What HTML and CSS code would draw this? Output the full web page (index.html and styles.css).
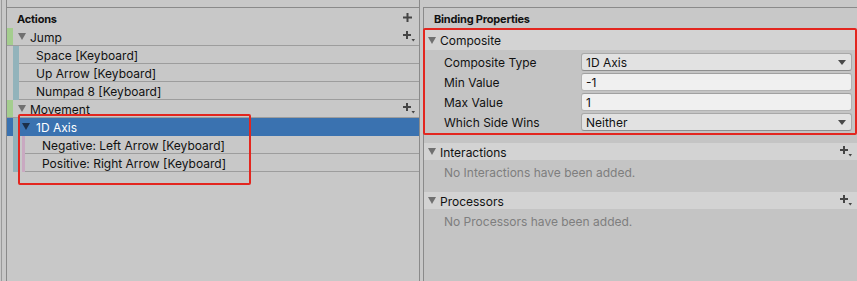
FILE: index.html
```html
<!DOCTYPE html>
<html>
<head>
<meta charset="utf-8">
<link rel="stylesheet" href="styles.css">
</head>
<body>
<div class="app">
  <div class="edge"></div>
  <div class="left">
    <div class="left-body">
      <div class="panel-head">
        <span>Actions</span>
        <svg class="plus" width="9" height="9" viewBox="0 0 9 9"><rect x="0" y="3.5" width="9" height="2"/><rect x="3.5" y="0" width="2" height="9"/></svg>
      </div>
      <div class="row action">
        <span class="bar green"></span>
        <div class="cell">
          <svg class="tri" width="8" height="7" viewBox="0 0 8 7"><path d="M0 0H8L4 7Z"/></svg>
          <span class="label">Jump</span>
          <svg class="plusdd" width="12" height="11" viewBox="0 0 12 11"><rect x="0" y="3" width="8" height="2"/><rect x="3" y="0" width="2" height="8"/><path d="M8.5 8H12L10.25 10.5Z"/></svg>
        </div>
      </div>
      <div class="row binding">
        <span class="bar"></span><span class="bar teal"></span>
        <div class="cell"><span class="label">Space [Keyboard]</span></div>
      </div>
      <div class="row binding">
        <span class="bar"></span><span class="bar teal"></span>
        <div class="cell"><span class="label">Up Arrow [Keyboard]</span></div>
      </div>
      <div class="row binding">
        <span class="bar"></span><span class="bar teal"></span>
        <div class="cell"><span class="label">Numpad 8 [Keyboard]</span></div>
      </div>
      <div class="row action">
        <span class="bar green"></span>
        <div class="cell">
          <svg class="tri" width="8" height="7" viewBox="0 0 8 7"><path d="M0 0H8L4 7Z"/></svg>
          <span class="label">Movement</span>
          <svg class="plusdd" width="12" height="11" viewBox="0 0 12 11"><rect x="0" y="3" width="8" height="2"/><rect x="3" y="0" width="2" height="8"/><path d="M8.5 8H12L10.25 10.5Z"/></svg>
        </div>
      </div>
      <div class="row composite selected">
        <span class="bar"></span><span class="bar teal"></span>
        <div class="cell">
          <svg class="tri dark" width="8" height="7" viewBox="0 0 8 7"><path d="M0 0H8L4 7Z"/></svg>
          <span class="label">1D Axis</span>
        </div>
      </div>
      <div class="row part">
        <span class="bar"></span><span class="bar teal"></span><span class="bar thin"></span><span class="bar thin pink"></span>
        <div class="cell"><span class="label">Negative: Left Arrow [Keyboard]</span></div>
      </div>
      <div class="row part">
        <span class="bar"></span><span class="bar teal"></span><span class="bar thin"></span><span class="bar thin pink"></span>
        <div class="cell"><span class="label">Positive: Right Arrow [Keyboard]</span></div>
      </div>
    </div>
  </div>
  <div class="right">
    <div class="rhead">Binding Properties</div>
    <div class="rbody">
      <div class="fold-head first">
        <svg class="tri" width="8" height="7" viewBox="0 0 8 7"><path d="M0 0H8L4 7Z"/></svg>
        <span class="label">Composite</span>
      </div>
      <div class="props">
        <div class="prop"><span class="plabel">Composite Type</span><div class="field dd"><span>1D Axis</span><svg width="8" height="5" viewBox="0 0 8 5"><path d="M0 0H8L4 5Z"/></svg></div></div>
        <div class="prop"><span class="plabel">Min Value</span><div class="field tf"><span>-1</span></div></div>
        <div class="prop"><span class="plabel">Max Value</span><div class="field tf"><span>1</span></div></div>
        <div class="prop"><span class="plabel">Which Side Wins</span><div class="field dd"><span>Neither</span><svg width="8" height="5" viewBox="0 0 8 5"><path d="M0 0H8L4 5Z"/></svg></div></div>
      </div>
      <div class="fold-head sec">
        <svg class="tri" width="8" height="7" viewBox="0 0 8 7"><path d="M0 0H8L4 7Z"/></svg>
        <span class="label">Interactions</span>
        <svg class="plusdd" width="12" height="11" viewBox="0 0 12 11"><rect x="0" y="3" width="8" height="2"/><rect x="3" y="0" width="2" height="8"/><path d="M8.5 8H12L10.25 10.5Z"/></svg>
      </div>
      <div class="help">No Interactions have been added.</div>
      <div class="fold-head">
        <svg class="tri" width="8" height="7" viewBox="0 0 8 7"><path d="M0 0H8L4 7Z"/></svg>
        <span class="label">Processors</span>
        <svg class="plusdd" width="12" height="11" viewBox="0 0 12 11"><rect x="0" y="3" width="8" height="2"/><rect x="3" y="0" width="2" height="8"/><path d="M8.5 8H12L10.25 10.5Z"/></svg>
      </div>
      <div class="help">No Processors have been added.</div>
    </div>
  </div>
</div>
<div class="annot annot-left"></div>
<div class="annot annot-right"></div>
</body>
</html>
```
FILE: styles.css
```css
* { box-sizing: border-box; }
html, body { margin: 0; padding: 0; }
body {
  background: #c8c8c8;
  font-family: Inter, "Noto Sans", sans-serif;
  font-size: 12px;
  color: #111;
  width: 857px;
  height: 281px;
  overflow: hidden;
  position: relative;
}
.app { display: flex; height: 281px; }
.edge { width: 1px; margin-left: 1px; margin-right: 4px; background: #9a9a9a; flex: none; }
.left {
  width: 414px;
  flex: none;
  border-left: 1px solid #8a8a8a;
  border-right: 1px solid #8a8a8a;
  padding-top: 7px;
}
.left-body { border-top: 1px solid #8a8a8a; }
.panel-head {
  height: 20px;
  display: flex;
  align-items: center;
  justify-content: space-between;
  padding: 1px 7px 0 10px;
  font-weight: 700;
  font-size: 11px;
  letter-spacing: -0.2px;
}
.panel-head .plus { margin-top: -3px; }
.plus, .plusdd { fill: #454545; flex: none; }
.row { display: flex; height: 18px; }
.bar { width: 6px; flex: none; }
.bar.thin { width: 3px; }
.green { background: #a4cd8e; }
.teal { background: #92b3bb; }
.pink { background: #c9a9c1; }
.cell {
  flex: 1;
  display: flex;
  align-items: center;
  border-bottom: 1px solid #9d9d9d;
  padding-right: 4px;
}
.label { flex: 1; white-space: nowrap; padding-top: 2px; }
.row.action { border-bottom: 1px solid #9d9d9d; }
.row.action .bar { height: 17px; }
.row.action .cell { border-bottom: none; padding-left: 5px; }
.tri { fill: #707070; flex: none; margin-right: 4px; }
.tri.dark { fill: #1c2f49; }
.row.binding .cell { padding-left: 17px; }
.row.selected { background: #3a72b0; }
.row.selected .cell { padding-left: 3px; color: #fff; border-bottom-color: #3a72b0; }
.row.selected .tri { margin-right: 6px; }
.row.part .cell { padding-left: 17px; }
.right {
  flex: 1;
  margin-left: 3px;
  margin-top: 7px;
  border-left: 1px solid #8a8a8a;
  border-top: 1px solid #8a8a8a;
  display: flex;
  flex-direction: column;
}
.rhead {
  height: 21px;
  display: flex;
  align-items: center;
  padding: 1px 0 0 10px;
  font-weight: 700;
  font-size: 11px;
  letter-spacing: -0.2px;
}
.rbody { flex: 1; background: #c4c4c4; }
.fold-head {
  height: 17px;
  display: flex;
  align-items: center;
  background: #d3d3d3;
  padding: 0 5px 0 4px;
}
.fold-head .label { padding-top: 1px; }
.fold-head.first { height: 20px; margin-top: 1px; }
.fold-head.sec { margin-top: 12px; }
.props { padding-top: 3px; display: flex; flex-direction: column; gap: 2px; }
.prop { display: flex; height: 18px; align-items: center; }
.plabel { width: 157px; padding-left: 20px; flex: none; }
.field {
  width: 271px;
  height: 18px;
  border-radius: 3px;
  display: flex;
  align-items: center;
  justify-content: space-between;
  padding: 0 5px 0 4px;
}
.field svg { fill: #4a4a4a; }
.dd { background: #e2e2e2; border: 1px solid #a8a8a8; border-bottom-color: #8e8e8e; }
.tf { background: #f0f0f0; border: 1px solid #b2b2b2; border-top-color: #a0a0a0; }
.help { height: 32px; padding: 5px 0 0 20px; line-height: 16px; color: #7e7e7e; }
.annot {
  position: absolute;
  border: 2px solid #e3261f;
  border-radius: 2px;
}
.annot-left { left: 18px; top: 114px; width: 233px; height: 71px; }
.annot-right { left: 423px; top: 28px; width: 434px; height: 107px; }
```
